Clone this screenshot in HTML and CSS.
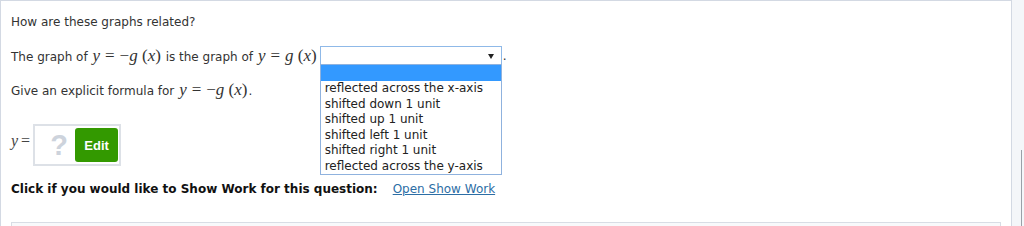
FILE: index.html
```html
<!DOCTYPE html>
<html lang="en">
<head>
    <meta charset="UTF-8">
    <title>Question</title>
    <link rel="stylesheet" href="styles.css">
</head>
<body>
    <div class="page">
        <div class="panel">
            <p class="line first">How are these graphs related?</p>

            <div class="row">
                <span class="row-text">The graph of <span class="math"><i>y</i><span class="eq">=</span>−<i>g</i> (<i>x</i>)</span> is the graph of <span class="math"><i>y</i><span class="eq">=</span><i>g</i> (<i>x</i>)</span></span>
                <div class="select-wrap">
                    <div class="select">
                        <span class="arrow"></span>
                    </div>
                    <!-- opened list of the select -->
                    <ul class="options">
                        <li class="active">&nbsp;</li>
                        <li>reflected across the x-axis</li>
                        <li>shifted down 1 unit</li>
                        <li>shifted up 1 unit</li>
                        <li>shifted left 1 unit</li>
                        <li>shifted right 1 unit</li>
                        <li>reflected across the y-axis</li>
                    </ul>
                </div>
                <span class="dot">.</span>
            </div>

            <p class="line formula">Give an explicit formula for <span class="math"><i>y</i><span class="eq">=</span>−<i>g</i> (<i>x</i>)</span>.</p>

            <div class="answer">
                <span class="math small"><i>y</i><span class="eq">=</span></span>
                <div class="answer-box">
                    <span class="qmark">?</span>
                    <button class="edit">Edit</button>
                </div>
            </div>

            <p class="line show-work"><b>Click if you would like to Show Work for this question:</b><a href="#">Open Show Work</a></p>

            <div class="work-box"></div>
        </div>
        <div class="scroll"></div>
    </div>
</body>
</html>
```

FILE: styles.css
```css
* {
    box-sizing: border-box;
}

body {
    margin: 0;
    font-family: "DejaVu Sans", Verdana, sans-serif;
    font-size: 12px;
    color: #333;
    background: #f4f6f9;
}

.page {
    display: flex;
    height: 226px;
    overflow: hidden;
}

.panel {
    width: 1012px;
    padding: 0 10px;
    background: #fff;
    border: 1px solid #d3d9e3;
    border-bottom: none;
}

.line {
    margin: 0;
    height: 20px;
    line-height: 20px;
    white-space: nowrap;
}

.first {
    margin-top: 11px;
}

.math {
    font-family: "Liberation Serif", "Times New Roman", serif;
    font-size: 17px;
    line-height: 10px;
    margin: 0 1px;
}

.eq {
    margin: 0 5px;
}

.row {
    display: flex;
    align-items: flex-end;
    margin-top: 14px;
    height: 20px;
    line-height: 20px;
}

.row-text {
    white-space: nowrap;
    margin-bottom: -1px;
}

.select-wrap {
    position: relative;
    align-self: flex-start;
    margin-left: 2px;
}

.select {
    position: relative;
    width: 182px;
    height: 19px;
    border: 1px solid #8fb9e8;
    background: #fff;
}

.arrow {
    position: absolute;
    right: 7px;
    top: 7px;
    border-left: 3px solid transparent;
    border-right: 3px solid transparent;
    border-top: 5px solid #222;
}

.options {
    position: absolute;
    left: 0;
    top: 18px;
    width: 182px;
    margin: 0;
    padding: 0;
    list-style: none;
    background: #fff;
    border: 1px solid #8fb2de;
    color: #222;
    z-index: 2;
}

.options li {
    height: 15.5px;
    line-height: 15.5px;
    padding-left: 4px;
    white-space: nowrap;
}

.options li.active {
    background: #3399ff;
    height: 16px;
}

.dot {
    margin-left: 1px;
}

.formula {
    margin-top: 15px;
}

.answer {
    display: flex;
    align-items: center;
    margin-top: 23px;
    height: 42px;
}

.small {
    font-size: 16px;
    color: #444;
    margin: -8px 0 0 0;
}

.small .eq {
    margin: 0 0 0 3px;
}

.answer-box {
    display: flex;
    align-items: center;
    margin-left: 3px;
    width: 88px;
    height: 42px;
    border: 2px solid #dde1e7;
    padding-left: 15px;
}

.qmark {
    font-family: "Liberation Sans", Arial, sans-serif;
    font-weight: bold;
    font-size: 29px;
    color: #cdd3dc;
    width: 25px;
}

.edit {
    width: 43px;
    height: 34px;
    border: none;
    border-radius: 3px;
    background: #339900;
    color: #fff;
    font-family: "Liberation Sans", Arial, sans-serif;
    font-weight: bold;
    font-size: 13px;
    padding: 0;
}

.show-work {
    margin-top: 13px;
}

.show-work b {
    color: #111;
}

.show-work a {
    margin-left: 15px;
    color: #2c6ea5;
}

.work-box {
    margin-top: 23px;
    height: 20px;
    border: 1px solid #d8dde5;
    background: #f8f9fb;
}

.scroll {
    width: 1px;
    margin-left: 9px;
    margin-top: 150px;
    background: #9aa0a8;
}
```
